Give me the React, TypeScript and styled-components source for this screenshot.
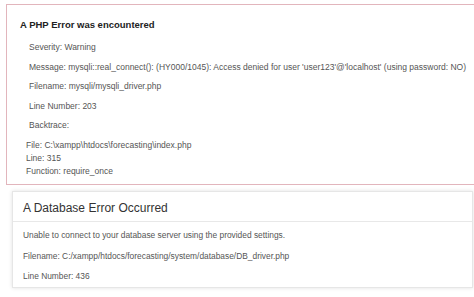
import styled, { createGlobalStyle } from "styled-components";

const GlobalStyle = createGlobalStyle`
  html, body {
    margin: 0;
    padding: 0;
    background: #ffffff;
    font-family: "Liberation Sans", Arial, sans-serif;
  }
`;

const Page = styled.div`
  width: 474px;
  height: 297px;
  overflow: hidden;
  padding: 4px 0 0 6px;
  box-sizing: border-box;
`;

const PhpError = styled.div`
  border: 1px solid #e2b5bc;
  border-right: none;
  padding: 14px 0 8px 13px;
  height: 181px;
  box-sizing: border-box;
  color: #555555;
  font-size: 8.5px;
`;

const PhpTitle = styled.h4`
  margin: 0 0 12px 0;
  font-size: 9.5px;
  font-weight: bold;
  color: #222222;
`;

const Para = styled.p`
  margin: 0 0 ${(p: { $gap?: number }) => p.$gap ?? 9.6}px 9px;
  line-height: 10px;
  white-space: nowrap;
`;

const Trace = styled.p`
  margin: 0 0 0 6px;
  line-height: 13px;
`;

const DbError = styled.div`
  margin: 6px 1px 0 6px;
  border: 1px solid #e6e6e6;
  box-shadow: 0 0 4px rgba(0, 0, 0, 0.12);
  background: #ffffff;
  height: 97px;
  box-sizing: border-box;
`;

const DbTitle = styled.h1`
  margin: 0;
  padding: 9px 10px 6px 10px;
  font-size: 12px;
  font-weight: normal;
  color: #333333;
  border-bottom: 1px solid #e8e8e8;
  line-height: 14px;
`;

const DbBody = styled.div`
  padding: 8px 10px 0 10px;
  color: #555555;
  font-size: 8.4px;
`;

const DbLine = styled.p`
  margin: 0 0 10.5px 0;
  line-height: 10px;
`;

export default function App() {
  return (
    <>
      <GlobalStyle />
      <Page>
        <PhpError>
          <PhpTitle>A PHP Error was encountered</PhpTitle>
          <Para>Severity: Warning</Para>
          <Para>
            Message: mysqli::real_connect(): (HY000/1045): Access denied for
            user 'user123'@'localhost' (using password: NO)
          </Para>
          <Para>Filename: mysqli/mysqli_driver.php</Para>
          <Para>Line Number: 203</Para>
          <Para $gap={9}>Backtrace:</Para>
          <Trace>
            File: C:\xampp\htdocs\forecasting\index.php
            <br />
            Line: 315
            <br />
            Function: require_once
          </Trace>
        </PhpError>
        <DbError>
          <DbTitle>A Database Error Occurred</DbTitle>
          <DbBody>
            <DbLine>
              Unable to connect to your database server using the provided
              settings.
            </DbLine>
            <DbLine>
              Filename:
              C:/xampp/htdocs/forecasting/system/database/DB_driver.php
            </DbLine>
            <DbLine>Line Number: 436</DbLine>
          </DbBody>
        </DbError>
      </Page>
    </>
  );
}
